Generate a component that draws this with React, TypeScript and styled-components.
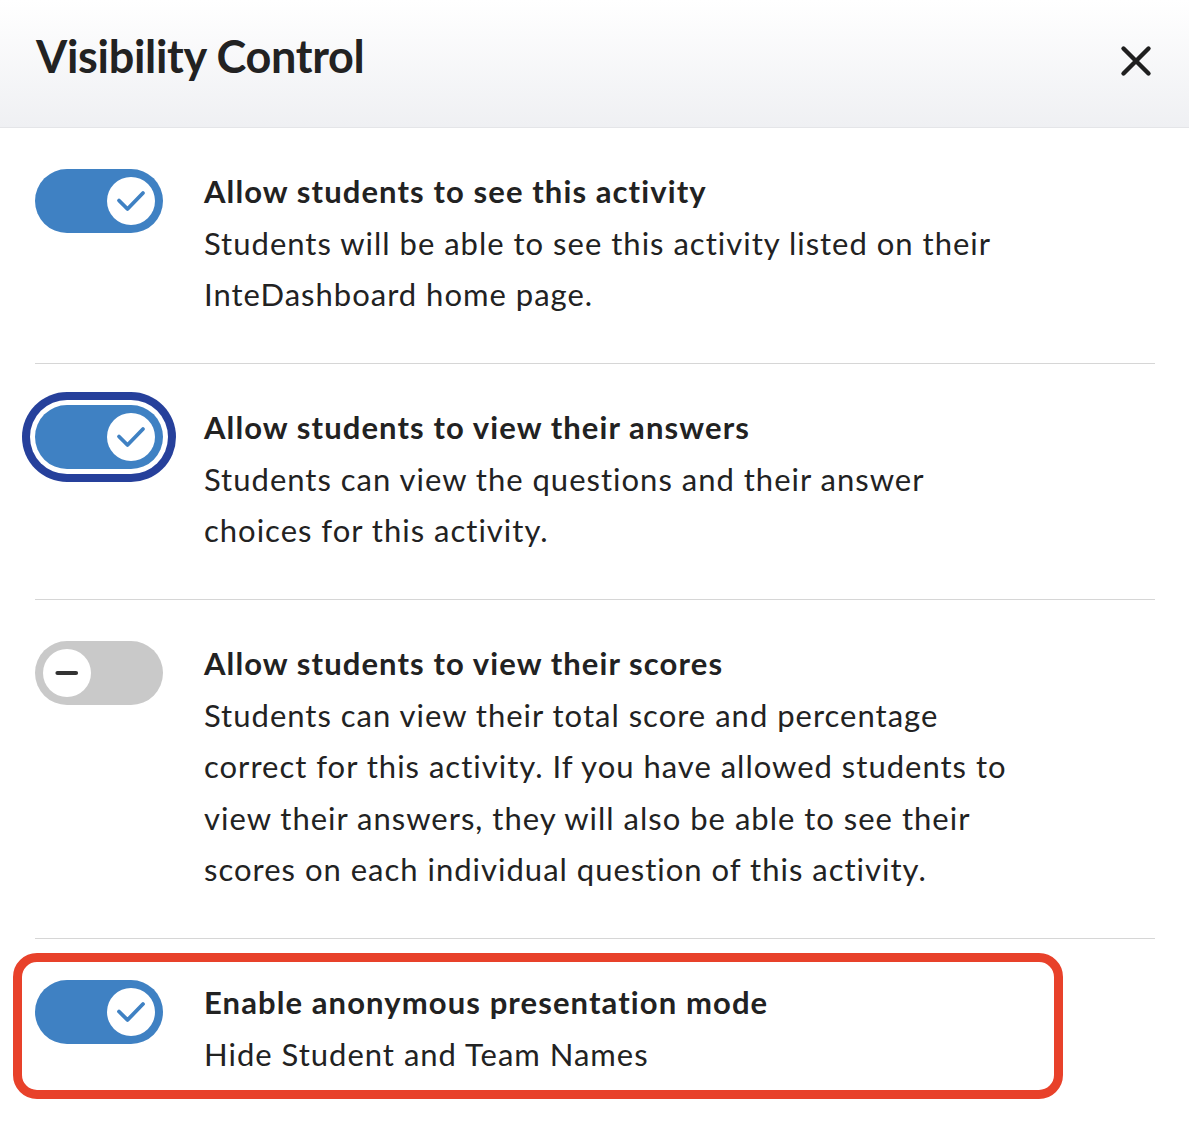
import React from "react";
import styled, { createGlobalStyle, css } from "styled-components";

const GlobalStyle = createGlobalStyle`
  html, body {
    margin: 0;
    padding: 0;
    background: #fff;
  }
  body {
    font-family: Lato, "Open Sans", "Liberation Sans", sans-serif;
    color: #222;
  }
`;

const Panel = styled.div`
  width: 1189px;
  height: 1123px;
  overflow: hidden;
  background: #fff;
`;

const Header = styled.header`
  height: 128px;
  box-sizing: border-box;
  display: flex;
  align-items: center;
  justify-content: space-between;
  padding: 0 36px 15px 36px;
  background: linear-gradient(to bottom, #ffffff 0%, #eff0f3 100%);
  border-bottom: 1px solid #e4e5e8;
`;

const Title = styled.h1`
  margin: 0;
  font-size: 45px;
  font-weight: 700;
  letter-spacing: -0.3px;
  color: #222;
`;

const CloseButton = styled.button`
  border: 0;
  background: transparent;
  padding: 0;
  width: 34px;
  height: 34px;
  display: flex;
  align-items: center;
  justify-content: center;
  cursor: pointer;
  margin-top: 10px;
`;

const List = styled.div`
  padding: 0 34px 0 35px;
`;

const Row = styled.div<{ $highlight?: boolean; $last?: boolean }>`
  position: relative;
  display: flex;
  gap: 41px;
  padding: 38px 0 42.5px;
  border-bottom: ${(p) => (p.$last ? "none" : "1px solid #d6d6d6")};

  ${(p) =>
    p.$highlight &&
    css`
      &::after {
        content: "";
        position: absolute;
        top: 14px;
        left: -22px;
        right: 92px;
        height: 146px;
        box-sizing: border-box;
        border: 9px solid #e8412a;
        border-radius: 24px;
        pointer-events: none;
      }
    `}
`;

const Toggle = styled.button<{ $on: boolean; $focused?: boolean }>`
  flex: none;
  position: relative;
  width: 128px;
  height: 64px;
  margin-top: 3px;
  border: 0;
  padding: 0 8px;
  border-radius: 32px;
  display: flex;
  align-items: center;
  justify-content: ${(p) => (p.$on ? "flex-end" : "flex-start")};
  background: ${(p) => (p.$on ? "#3f81c3" : "#c9c9c9")};
  cursor: pointer;
  ${(p) =>
    p.$focused &&
    css`
      box-shadow: 0 0 0 5px #fff, 0 0 0 13px #26409b;
    `}
`;

const Knob = styled.span`
  width: 48px;
  height: 48px;
  border-radius: 50%;
  background: #fff;
  display: flex;
  align-items: center;
  justify-content: center;
`;

const Text = styled.div`
  flex: 1;
  font-size: 31px;
  line-height: 51.5px;
  letter-spacing: 1px;
`;

const RowTitle = styled.div`
  font-weight: 700;
  letter-spacing: 1.1px;
`;

const RowDesc = styled.div`
  font-weight: 400;
`;

const Check = () => (
  <svg width="48" height="48" viewBox="0 0 48 48" fill="none">
    <path
      d="M12 23.5 L20.5 32 L36 16"
      stroke="#3f81c3"
      strokeWidth="3.8"
      strokeLinecap="round"
      strokeLinejoin="round"
    />
  </svg>
);

const Minus = () => (
  <svg width="48" height="48" viewBox="0 0 48 48" fill="none">
    <path d="M14.5 24 H33" stroke="#333" strokeWidth="4.2" strokeLinecap="round" />
  </svg>
);

const CloseIcon = () => (
  <svg width="32" height="32" viewBox="0 0 32 32" fill="none">
    <path
      d="M3.5 3.5 L28.5 28.5 M28.5 3.5 L3.5 28.5"
      stroke="#1f1f1f"
      strokeWidth="4.4"
      strokeLinecap="round"
    />
  </svg>
);

type Item = {
  title: string;
  lines: string[];
  on: boolean;
  focused?: boolean;
  highlight?: boolean;
};

const items: Item[] = [
  {
    title: "Allow students to see this activity",
    lines: [
      "Students will be able to see this activity listed on their",
      "InteDashboard home page.",
    ],
    on: true,
  },
  {
    title: "Allow students to view their answers",
    lines: [
      "Students can view the questions and their answer",
      "choices for this activity.",
    ],
    on: true,
    focused: true,
  },
  {
    title: "Allow students to view their scores",
    lines: [
      "Students can view their total score and percentage",
      "correct for this activity. If you have allowed students to",
      "view their answers, they will also be able to see their",
      "scores on each individual question of this activity.",
    ],
    on: false,
  },
  {
    title: "Enable anonymous presentation mode",
    lines: ["Hide Student and Team Names"],
    on: true,
    highlight: true,
  },
];

export default function App() {
  return (
    <Panel>
      <GlobalStyle />
      <Header>
        <Title>Visibility Control</Title>
        <CloseButton aria-label="Close">
          <CloseIcon />
        </CloseButton>
      </Header>
      <List>
        {items.map((item, i) => (
          <Row key={item.title} $highlight={item.highlight} $last={i === items.length - 1}>
            <Toggle $on={item.on} $focused={item.focused} aria-pressed={item.on}>
              <Knob>{item.on ? <Check /> : <Minus />}</Knob>
            </Toggle>
            <Text>
              <RowTitle>{item.title}</RowTitle>
              <RowDesc>
                {item.lines.map((l, j) => (
                  <React.Fragment key={j}>
                    {l}
                    {j < item.lines.length - 1 && <br />}
                  </React.Fragment>
                ))}
              </RowDesc>
            </Text>
          </Row>
        ))}
      </List>
    </Panel>
  );
}
